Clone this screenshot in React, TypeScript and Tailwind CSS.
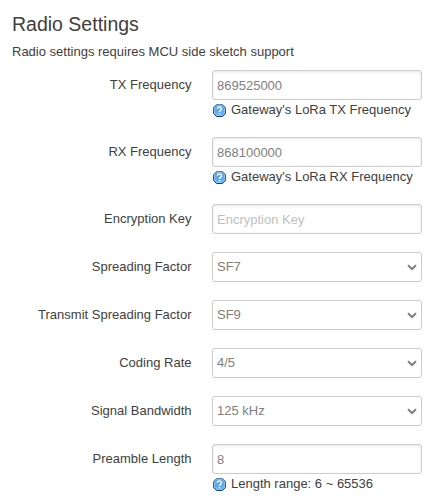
import { useState } from "react"

type Field = {
    label: string,
    value: string,
    placeholder?: string,
    hint?: string,
    options?: string[]
}

const fields: Field[] = [
    { label: "TX Frequency", value: "869525000", hint: "Gateway's LoRa TX Frequency" },
    { label: "RX Frequency", value: "868100000", hint: "Gateway's LoRa RX Frequency" },
    { label: "Encryption Key", value: "", placeholder: "Encryption Key" },
    { label: "Spreading Factor", value: "SF7", options: ["SF7", "SF8", "SF9", "SF10", "SF11", "SF12"] },
    { label: "Transmit Spreading Factor", value: "SF9", options: ["SF7", "SF8", "SF9", "SF10", "SF11", "SF12"] },
    { label: "Coding Rate", value: "4/5", options: ["4/5", "4/6", "4/7", "4/8"] },
    { label: "Signal Bandwidth", value: "125 kHz", options: ["125 kHz", "250 kHz", "500 kHz"] },
    { label: "Preamble Length", value: "8", hint: "Length range: 6 ~ 65536" },
]

function HelpIcon() {
    return (
        <svg width="13" height="13" viewBox="0 0 13 13" className="shrink-0">
            <defs>
                <linearGradient id="help" x1="0" y1="0" x2="0" y2="1">
                    <stop offset="0" stopColor="#5d9bd8" />
                    <stop offset="1" stopColor="#62b8fa" />
                </linearGradient>
                <linearGradient id="help-edge" x1="0" y1="0" x2="0" y2="1">
                    <stop offset="0" stopColor="#4d83bd" />
                    <stop offset="1" stopColor="#1c3f6e" />
                </linearGradient>
            </defs>
            <path d="M3.500 .5h6L12.500 3.500v6L9.500 12.500h-6L.5 9.500v-6z" fill="url(#help)" stroke="url(#help-edge)" />
            <path d="M4 1.500h5L11.500 4v5L9 11.500H4L1.500 9V4z" fill="none" stroke="#a5cdf2" strokeOpacity=".6" />
            <path d="M4.400 4.800C4.400 2.500 8.600 2.500 8.600 4.700C8.600 6.200 6.500 6 6.500 8" fill="none" stroke="#fff" strokeWidth="1.400" />
            <path d="M5.800 9h1.400v1.300H5.800z" fill="#fff" />
        </svg>
    )
}

function Row({ field }: { field: Field }) {
    const [value, setValue] = useState(field.value)
    const id = field.label.toLowerCase().replace(/ /g, "-")

    return (
        <div className="mb-[18px] flex">
            <label htmlFor={id} className="mr-[20.5px] w-[179.5px] pt-1.5 text-right leading-[18px]">{field.label}</label>
            <div className="w-[210px]">
                {field.options ? (
                    <div className="relative">
                        <select
                            id={id}
                            value={value}
                            onChange={e => setValue(e.target.value)}
                            className="block h-[30px] w-full appearance-none rounded-[3px] border border-[#ccc] bg-white px-1 text-[#808080] outline-none"
                        >
                            {field.options.map(o => <option key={o} value={o}>{o}</option>)}
                        </select>
                        <svg width="10" height="7" viewBox="0 0 10 7" className="pointer-events-none absolute top-3 right-[5px]">
                            <path d="M1 1.200L5 5L9 1.200" fill="none" stroke="#808080" strokeWidth="2" />
                        </svg>
                    </div>
                ) : (
                    <input
                        id={id}
                        type="text"
                        value={value}
                        placeholder={field.placeholder}
                        onChange={e => setValue(e.target.value)}
                        className="block h-[30px] w-full rounded-[3px] border border-[#ccc] bg-white px-1 text-[#808080] shadow-[inset_0_1px_3px_rgba(0,0,0,0.1)] outline-none placeholder:text-[#bfbfbf]"
                    />
                )}
                {field.hint && (
                    <div className="flex h-[19px] gap-[5px] pl-px leading-[20px]">
                        <span className="pt-1"><HelpIcon /></span>
                        <span>{field.hint}</span>
                    </div>
                )}
            </div>
        </div>
    )
}

export default function App() {
    return (
        <div className="h-[497px] w-[436px] overflow-hidden bg-white pl-3 font-['Liberation_Sans',Arial,sans-serif] text-[13px] text-[#404040]">
            <h3 className="pt-1.5 text-[19.5px] leading-[37px]">Radio Settings</h3>
            <p className="mb-[9px] leading-[18px]">Radio settings requires MCU side sketch support</p>
            {fields.map(field => <Row key={field.label} field={field} />)}
        </div>
    )
}
